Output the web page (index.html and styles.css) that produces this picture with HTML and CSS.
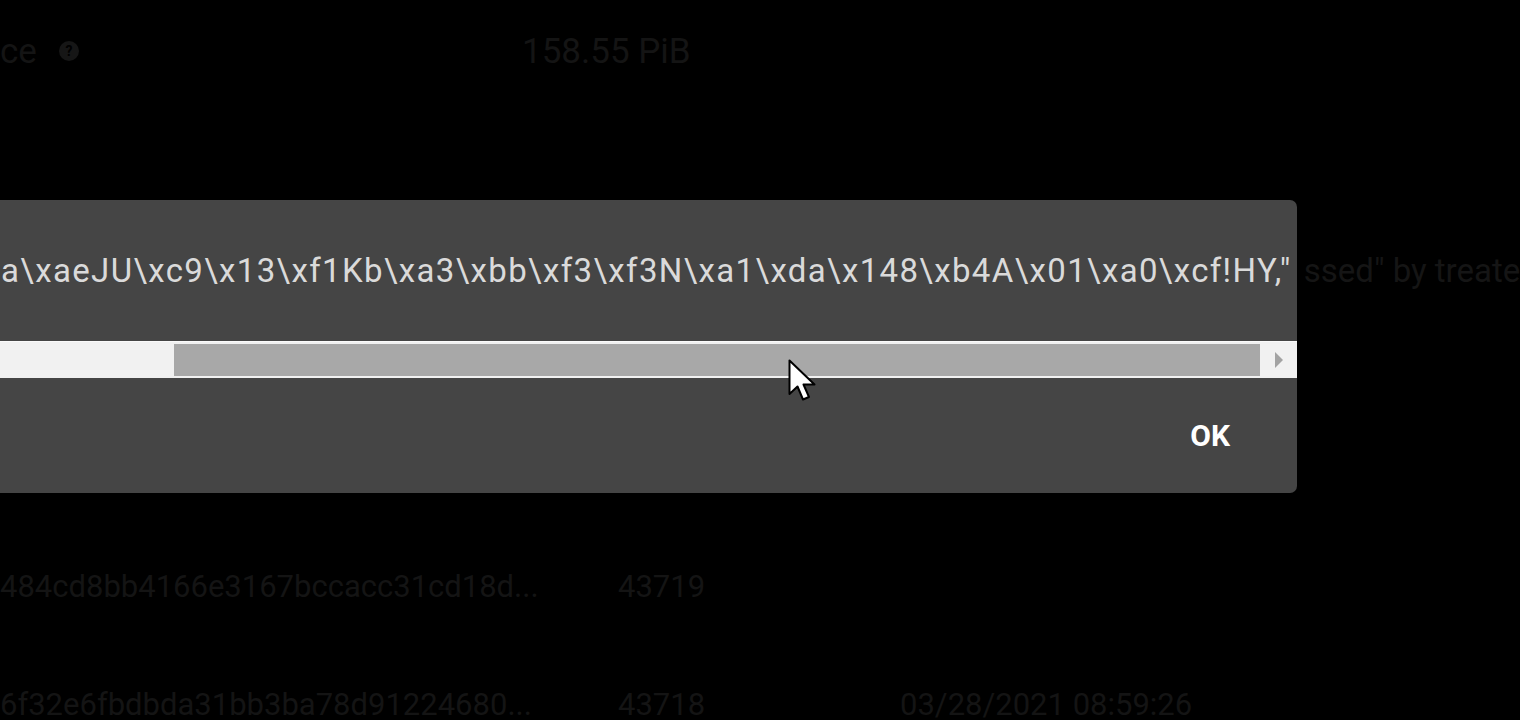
FILE: index.html
```html
<!DOCTYPE html>
<html lang="en">
<head>
    <meta charset="UTF-8">
    <title>Transaction details</title>
    <link rel="stylesheet" href="styles.css">
</head>
<body>
    <div class="page">
        <div class="stat-row">
            <div class="stat-label">ce <span class="help-icon">?</span></div>
            <div class="stat-value">158.55 PiB</div>
        </div>

        <div class="table">
            <div class="table-row">
                <div class="cell hash">484cd8bb4166e3167bccacc31cd18d...</div>
                <div class="cell height">43719</div>
                <div class="cell date"></div>
            </div>
            <div class="table-row">
                <div class="cell hash">6f32e6fbdbda31bb3ba78d91224680...</div>
                <div class="cell height">43718</div>
                <div class="cell date">03/28/2021 08:59:26</div>
            </div>
        </div>
    </div>

    <div class="dialog">
        <div class="dialog-content">
            <div class="value">a\xaeJU\xc9\x13\xf1Kb\xa3\xbb\xf3\xf3N\xa1\xda\x148\xb4A\x01\xa0\xcf!HY,"<span class="value-spill">ssed" by treate</span></div>
        </div>
        <div class="hscroll">
            <div class="hscroll-track">
                <div class="hscroll-thumb"></div>
            </div>
            <div class="hscroll-arrow"></div>
        </div>
        <div class="dialog-actions">
            <button class="ok-btn">OK</button>
        </div>
    </div>

    <svg class="cursor" width="30" height="46" viewBox="0 0 30 46">
        <path d="M1.5 1.5 L1.5 35 L9.5 27.5 L15 40.5 L21 38 L15.5 25.5 L26.5 25.5 Z" fill="#fff" stroke="#000" stroke-width="2" stroke-linejoin="round"/>
    </svg>
</body>
</html>
```

FILE: styles.css
```css
body {
    margin: 0;
    background: #000;
    font-family: Roboto, 'Noto Sans', sans-serif;
    width: 1520px;
    height: 720px;
    overflow: hidden;
}

.page {
    color: #141414;
    font-size: 31px;
}

.stat-row {
    display: flex;
    padding-top: 30px;
    height: 42px;
    align-items: center;
    font-size: 35px;
}

.stat-label {
    width: 522px;
    display: flex;
    align-items: center;
    gap: 22px;
}

.help-icon {
    display: inline-flex;
    width: 20px;
    height: 20px;
    border-radius: 50%;
    background: #161616;
    color: #000;
    font-size: 14px;
    font-weight: 700;
    align-items: center;
    justify-content: center;
}

.table {
    margin-top: 496px;
    display: flex;
    flex-direction: column;
    gap: 80px;
}

.table-row {
    display: flex;
    height: 38px;
    line-height: 38px;
}

.cell.hash {
    width: 618px;
}

.cell.height {
    width: 282px;
}

.dialog {
    position: absolute;
    top: 200px;
    left: 0;
    width: 1297px;
    height: 293px;
    background: #454545;
    border-radius: 0 7px 7px 0;
    display: flex;
    flex-direction: column;
}

.dialog-content {
    height: 141px;
    display: flex;
    align-items: center;
}

.value {
    font-size: 33px;
    color: #dadada;
    white-space: nowrap;
    padding-left: 1px;
    letter-spacing: 1.35px;
}

.value-spill {
    color: #151515;
    margin-left: 12px;
    letter-spacing: 0;
    font-size: 33px;
}

.hscroll {
    display: flex;
    height: 36px;
    background: #f1f1f1;
    border-top: 1px solid #fafafa;
}

.hscroll-track {
    flex: 1;
    display: flex;
    align-items: center;
}

.hscroll-thumb {
    margin-left: 174px;
    width: 1086px;
    height: 32px;
    background: #a8a8a8;
}

.hscroll-arrow {
    width: 37px;
    display: flex;
    align-items: center;
    justify-content: center;
}

.hscroll-arrow::before {
    content: "";
    border-left: 8px solid #a3a3a3;
    border-top: 8px solid transparent;
    border-bottom: 8px solid transparent;
}

.dialog-actions {
    flex: 1;
    display: flex;
    justify-content: flex-end;
    align-items: flex-start;
    padding-top: 40px;
    padding-right: 45px;
}

.ok-btn {
    background: none;
    border: none;
    color: #fff;
    font-family: Roboto, sans-serif;
    font-size: 30px;
    font-weight: 700;
    padding: 0 22px;
    cursor: pointer;
}

.cursor {
    position: absolute;
    left: 788px;
    top: 359px;
}
```
